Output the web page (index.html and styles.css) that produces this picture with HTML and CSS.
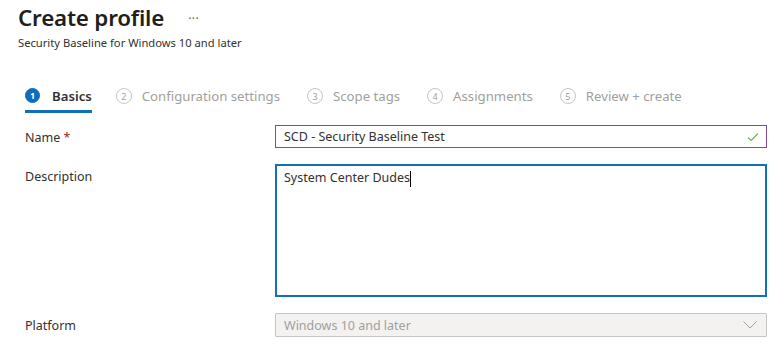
FILE: index.html
```html
<!DOCTYPE html>
<html>
<head>
<meta charset="utf-8">
<link rel="stylesheet" href="styles.css">
</head>
<body>
<div class="page">
  <header class="head">
    <div class="title-row">
      <h1 class="title">Create profile</h1>
      <span class="more">···</span>
    </div>
    <div class="subtitle">Security Baseline for Windows 10 and later</div>
  </header>

  <nav class="steps">
    <div class="step active"><span class="num">1</span><span class="label">Basics</span></div>
    <div class="step"><span class="num">2</span><span class="label">Configuration settings</span></div>
    <div class="step"><span class="num">3</span><span class="label">Scope tags</span></div>
    <div class="step"><span class="num">4</span><span class="label">Assignments</span></div>
    <div class="step"><span class="num">5</span><span class="label">Review + create</span></div>
  </nav>

  <div class="form">
    <div class="row row-name">
      <div class="lbl">Name <span class="req">*</span></div>
      <div class="field input valid">
        <span class="val">SCD - Security Baseline Test</span>
        <svg class="check" width="12" height="10" viewBox="0 0 12 10"><path d="M1 5.5 L4.2 8.5 L11 1.5" fill="none" stroke="#6bb24f" stroke-width="1.1"/></svg>
      </div>
    </div>
    <div class="row row-desc">
      <div class="lbl">Description</div>
      <div class="field textarea"><span class="val">System Center Dudes</span><span class="caret"></span></div>
    </div>
    <div class="row row-plat">
      <div class="lbl">Platform</div>
      <div class="field select">
        <span class="val">Windows 10 and later</span>
        <svg class="chev" width="14" height="8" viewBox="0 0 14 8"><path d="M0.5 0.5 L7 7 L13.5 0.5" fill="none" stroke="#a19f9d" stroke-width="1"/></svg>
      </div>
    </div>
  </div>
</div>
</body>
</html>
```
FILE: styles.css
```css
html, body {
  margin: 0;
  padding: 0;
  background: #ffffff;
}
body {
  font-family: "Segoe UI", "Noto Sans", "Open Sans", sans-serif;
  color: #323130;
}
.page {
  width: 777px;
  height: 349px;
  overflow: hidden;
}
.head {
  padding: 0 0 0 18px;
}
.title-row {
  display: flex;
  align-items: center;
  height: 36px;
}
.title {
  margin: 0;
  font-size: 22.4px;
  font-weight: 600;
  line-height: 32px;
  color: #201f1e;
  letter-spacing: -0.2px;
}
.more {
  margin-left: 24px;
  font-size: 12px;
  color: #605e5c;
  letter-spacing: 0.5px;
}
.subtitle {
  font-size: 11.2px;
  line-height: 14px;
  color: #323130;
}
.steps {
  display: flex;
  margin-top: 31px;
  padding-left: 25px;
  height: 36px;
}
.step {
  display: flex;
  align-items: center;
  height: 30px;
  margin-right: 27px;
  color: #a19f9d;
  font-size: 13.2px;
}
.step .num {
  box-sizing: border-box;
  width: 16px;
  height: 16px;
  border-radius: 50%;
  border: 1px solid #c8c6c4;
  font-size: 9px;
  display: flex;
  align-items: center;
  justify-content: center;
  margin-right: 10px;
  color: #a19f9d;
}
.step.active {
  border-bottom: 3px solid #1170b8;
  height: 29px;
  align-self: flex-start;
  margin-right: 24px;
}
.step.active .num {
  background: #0f6cbd;
  border-color: #0f6cbd;
  color: #ffffff;
  font-weight: 700;
  width: 15px;
  height: 15px;
  margin-right: 12px;
}
.step.active .label {
  color: #323130;
  font-weight: 600;
}
.form {
  padding-left: 25px;
  margin-top: 8px;
}
.row {
  display: flex;
  align-items: flex-start;
}
.lbl {
  width: 250px;
  font-size: 12.5px;
  line-height: 25px;
  color: #323130;
}
.req {
  color: #a4262c;
}
.field {
  box-sizing: border-box;
  width: 492px;
  display: flex;
  align-items: center;
  font-size: 12.5px;
  color: #323130;
}
.input {
  height: 23px;
  border: 1px solid #7e4b99;
  padding: 0 7px 0 8px;
  justify-content: space-between;
}
.row-desc {
  margin-top: 14px;
}
.row-desc .lbl {
  line-height: 26px;
}
.textarea {
  height: 133px;
  border: 2px solid #1170b8;
  align-items: flex-start;
  padding: 1px 0 0 7px;
  line-height: 22px;
}
.caret {
  display: inline-block;
  width: 1px;
  height: 16px;
  background: #000;
  margin-top: 4px;
}
.row-plat {
  margin-top: 16px;
}
.row-plat .lbl {
  line-height: 25px;
}
.select {
  height: 24px;
  background: #f3f2f1;
  border: 1px solid #c8c6c4;
  padding: 0 8px 0 8px;
  justify-content: space-between;
  color: #a19f9d;
  border-radius: 1px;
}
.chev {
  margin-right: 1px;
}
```
